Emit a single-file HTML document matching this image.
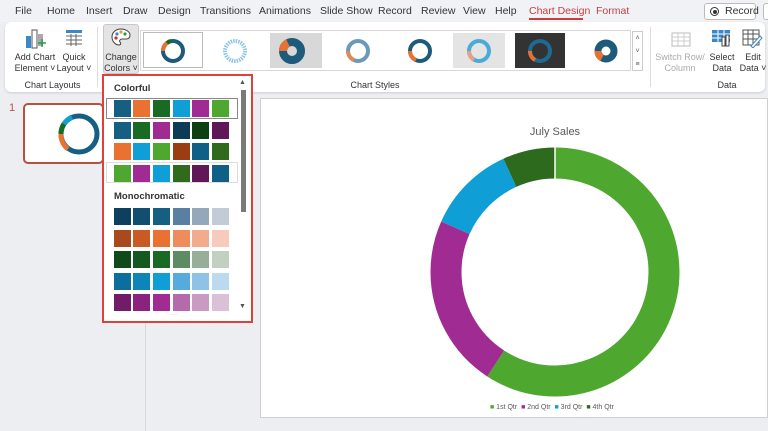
<!DOCTYPE html>
<html><head><meta charset="utf-8"><style>
*{margin:0;padding:0;box-sizing:border-box}
body{width:768px;height:431px;overflow:hidden;background:#eceef2;font-family:"Liberation Sans",sans-serif;position:relative;font-size:11px;color:#333}
.a{position:absolute}
.tab{position:absolute;top:5px;font-size:10.5px;color:#333}
.lbl{position:absolute;font-size:9px;color:#333;text-align:center;line-height:11px}
.sw{position:absolute;width:17px;height:17px}
</style></head><body>
<div class="a" style="left:0;top:0;width:768px;height:22px;background:#f1f2f5"></div>
<span class="tab" style="left:15px">File</span>
<span class="tab" style="left:47px">Home</span>
<span class="tab" style="left:86px">Insert</span>
<span class="tab" style="left:123px">Draw</span>
<span class="tab" style="left:158px">Design</span>
<span class="tab" style="left:200px">Transitions</span>
<span class="tab" style="left:259px">Animations</span>
<span class="tab" style="left:320px">Slide Show</span>
<span class="tab" style="left:378px">Record</span>
<span class="tab" style="left:421px">Review</span>
<span class="tab" style="left:463px">View</span>
<span class="tab" style="left:495px">Help</span>
<span class="tab" style="left:529px;color:#c43e3e">Chart Design</span>
<div class="a" style="left:529px;top:18px;width:54px;height:2px;background:#c43e3e"></div>
<span class="tab" style="left:596px;color:#c43e3e">Format</span>
<div class="a" style="left:704px;top:3px;width:52px;height:17px;border:1px solid #bbb;border-radius:3px;background:#fff;font-size:10.5px;padding:1px 0 0 20px">Record</div>
<div class="a" style="left:710px;top:7px;width:9px;height:9px;border:1px solid #333;border-radius:50%"></div>
<div class="a" style="left:712.5px;top:9.5px;width:4px;height:4px;background:#333;border-radius:50%"></div>
<div class="a" style="left:763px;top:3px;width:8px;height:17px;border:1px solid #bbb;border-radius:3px;background:#fff"></div>

<div class="a" style="left:5px;top:22px;width:760px;height:70px;background:#fff;border-radius:6px;box-shadow:0 1px 2px #ccc"></div>
<!-- Add chart element icon -->
<svg class="a" style="left:24px;top:28px" width="22" height="22"><rect x="2" y="8" width="5" height="12" fill="#3a88c8"/><rect x="8" y="2" width="5" height="18" fill="none" stroke="#555"/><rect x="14" y="6" width="5" height="12" fill="#aaa"/><path d="M14 15h8M18 11v8" stroke="#2e9a4a" stroke-width="1.5"/></svg>
<div class="lbl" style="left:12px;top:52px;width:46px">Add Chart<br>Element ˅</div>
<svg class="a" style="left:64px;top:28px" width="20" height="20"><rect x="2" y="2" width="16" height="3" fill="#3a88c8"/><path d="M2 8h16M2 12h16M2 16h16M7 6v12M12 6v12" stroke="#666"/></svg>
<div class="lbl" style="left:56px;top:52px;width:36px">Quick<br>Layout ˅</div>
<div class="lbl" style="left:15px;top:80px;width:75px">Chart Layouts</div>
<div class="a" style="left:97px;top:27px;width:1px;height:60px;background:#ddd"></div>
<div class="a" style="left:103px;top:24px;width:36px;height:50px;background:#e4e4e4;border:1px solid #c8c8c8;border-radius:3px"></div>
<svg class="a" style="left:110px;top:27px" width="22" height="20"><path d="M11 2C5 2 2 6 2 10s3 8 7 8c2 0 2-2 1-3s0-3 2-3h4c3 0 4-2 4-4C20 5 16 2 11 2z" fill="#fff" stroke="#444"/><circle cx="7" cy="7" r="1.6" fill="#3a88c8"/><circle cx="11" cy="5" r="1.6" fill="#e0a030"/><circle cx="15" cy="7" r="1.6" fill="#2e9a4a"/><circle cx="6" cy="11" r="1.6" fill="#c0392b"/></svg>
<div class="lbl" style="left:103px;top:52px;width:36px">Change<br>Colors ˅</div>
<!-- gallery -->
<div class="a" style="left:140px;top:30px;width:491px;height:41px;border:1px solid #d8d8d8;background:#fff"></div>
<div class="a" style="left:143px;top:32px;width:60px;height:36px;border:1px solid #bbb"></div>
<svg class="a" style="left:140px;top:30px" width="500" height="42">
<g fill="none" stroke-width="4">
<circle cx="33" cy="21" r="10" stroke="#1e5a7a"/><path d="M23 21a10 10 0 0 1 4-8" stroke="#e97132"/><path d="M27 13a10 10 0 0 1 4-2" stroke="#196b24"/>
<circle cx="95" cy="21" r="10" stroke="#8cc6e6" stroke-dasharray="1.5 1"/>
<circle cx="158" cy="21" r="9" stroke="#1e5a7a" stroke-width="7"/><path d="M149 21a9 9 0 0 1 4-7" stroke="#e97132" stroke-width="7"/>
<circle cx="218" cy="21" r="10" stroke="#6a9ab8"/><path d="M208 21a10 10 0 0 0 6 9" stroke="#e08a5a"/>
<circle cx="280" cy="21" r="10" stroke="#1e5a7a"/><path d="M270 21a10 10 0 0 0 6 9" stroke="#e97132"/>
<circle cx="342" cy="21" r="10" stroke="#4aaad8"/><path d="M332 21a10 10 0 0 0 5 9" stroke="#e8a080"/><path d="M335 13a10 10 0 0 1 7-2" stroke="#60b040"/>
<circle cx="466" cy="21" r="8" stroke="#1e5a7a" stroke-width="7"/><path d="M458 21a8 8 0 0 0 4 7" stroke="#e97132" stroke-width="7"/>
</g></svg>
<div class="a" style="left:270px;top:33px;width:52px;height:35px;background:#d8d8d8;z-index:-0"></div>
<svg class="a" style="left:270px;top:33px" width="52" height="35"><circle cx="22" cy="18" r="9" fill="none" stroke="#1e5a7a" stroke-width="8"/><path d="M13 18a9 9 0 0 1 5-8" fill="none" stroke="#e97132" stroke-width="8"/></svg>
<div class="a" style="left:453px;top:33px;width:52px;height:35px;background:#e4e4e4"></div>
<svg class="a" style="left:453px;top:33px" width="52" height="35"><circle cx="26" cy="18" r="10" fill="none" stroke="#4aaad8" stroke-width="4"/><path d="M16 18a10 10 0 0 0 5 9" fill="none" stroke="#e8a080" stroke-width="4"/></svg>
<div class="a" style="left:515px;top:33px;width:50px;height:35px;background:#333"></div>
<svg class="a" style="left:515px;top:33px" width="50" height="35"><circle cx="25" cy="18" r="10" fill="none" stroke="#1e6a92" stroke-width="4"/><path d="M15 18a10 10 0 0 0 5 9" fill="none" stroke="#e97132" stroke-width="4"/></svg>
<div class="a" style="left:632px;top:31px;width:11px;height:40px;border:1px solid #ccc;font-size:7px;text-align:center;line-height:13px;color:#555">˄<br>˅<br>≡</div>
<div class="lbl" style="left:350px;top:80px;width:50px">Chart Styles</div>
<div class="a" style="left:650px;top:27px;width:1px;height:60px;background:#ddd"></div>
<svg class="a" style="left:670px;top:28px" width="22" height="20"><rect x="2" y="5" width="18" height="13" fill="none" stroke="#bbb"/><path d="M2 9h18M2 13h18M8 5v13M14 5v13" stroke="#ccc"/></svg>
<div class="lbl" style="left:654px;top:52px;width:52px;color:#aaa">Switch Row/<br>Column</div>
<svg class="a" style="left:711px;top:28px" width="22" height="20"><rect x="1" y="2" width="18" height="12" fill="#3a88c8"/><path d="M1 6h18M1 10h18M7 2v12M13 2v12" stroke="#fff"/><rect x="11" y="9" width="3" height="9" fill="#fff" stroke="#444"/><rect x="15" y="7" width="3" height="11" fill="#fff" stroke="#444"/></svg>
<div class="lbl" style="left:706px;top:52px;width:32px">Select<br>Data</div>
<svg class="a" style="left:742px;top:28px" width="22" height="20"><rect x="1" y="2" width="16" height="15" fill="none" stroke="#555"/><path d="M1 6h16M1 11h16M6 2v15M11 2v15" stroke="#555"/><path d="M9 18l9-10 2 2-9 10z" fill="#fff" stroke="#3a88c8"/></svg>
<div class="lbl" style="left:738px;top:52px;width:30px">Edit<br>Data ˅</div>
<div class="lbl" style="left:712px;top:80px;width:30px">Data</div>

<!-- left panel -->
<div class="a" style="left:145px;top:92px;width:1px;height:339px;background:#d8d8d8"></div>
<div class="a" style="left:9px;top:102px;font-size:11px;color:#c0504d">1</div>
<div class="a" style="left:23px;top:103px;width:81px;height:61px;border:2px solid #b5513f;border-radius:5px;background:#fff"></div>
<svg class="a" style="left:23px;top:103px" width="81" height="61"><g fill="none" stroke-width="5"><circle cx="56" cy="31" r="18" stroke="#156082"/><path d="M38 31a18 18 0 0 1 3-10" stroke="#196b24"/><path d="M41 21a18 18 0 0 1 8-7" stroke="#0f9ed5"/><path d="M45 46a18 18 0 0 1-7-15" stroke="#e97132"/></g></svg>

<!-- slide -->
<div class="a" style="left:260px;top:98px;width:508px;height:320px;background:#fff;border:1px solid #d0d0d0"></div>
<div class="a" style="left:505px;top:126px;width:100px;text-align:center;font-size:11px;color:#595959">July Sales</div>
<svg class="a" style="left:430px;top:147px" width="250" height="250"><g transform="rotate(-90 125 125)" fill="none" stroke-width="31">
<circle cx="125" cy="125" r="109" stroke="#4ea72e" stroke-dasharray="405 700"/>
<circle cx="125" cy="125" r="109" stroke="#a02b93" stroke-dasharray="0 405 154 700"/>
<circle cx="125" cy="125" r="109" stroke="#0f9ed5" stroke-dasharray="0 559 79 700"/>
<circle cx="125" cy="125" r="109" stroke="#2d6a1e" stroke-dasharray="0 638 47 700"/>
</g><g stroke="#fff" stroke-width="1.5"><line x1="125" y1="0" x2="125" y2="32"/></g></svg>
<div class="a" style="left:490px;top:404px;font-size:7px;color:#595959;white-space:nowrap"><span style="color:#4ea72e">■</span> 1st Qtr &nbsp;<span style="color:#a02b93">■</span> 2nd Qtr &nbsp;<span style="color:#0f9ed5">■</span> 3rd Qtr &nbsp;<span style="color:#2d6a1e">■</span> 4th Qtr</div>

<!-- dropdown -->
<div class="a" style="left:102px;top:74px;width:151px;height:249px;border:2px solid #e0403a;background:#fff"></div>
<div class="a" style="left:114px;top:83px;font-size:9.5px;font-weight:bold;color:#333">Colorful</div>
<div class="a" style="left:106px;top:98px;width:132px;height:21px;border:1px solid #888"></div>
<div class="a" style="left:106px;top:162px;width:132px;height:21px;border:1px solid #ddd"></div>
<div class="a" style="left:114px;top:191px;font-size:9.5px;font-weight:bold;color:#333">Monochromatic</div>
<div class="a" style="left:241px;top:90px;width:5px;height:122px;background:#7a7a7a"></div>
<div class="a" style="left:239px;top:79px;font-size:7px;color:#555">▲</div>
<div class="a" style="left:239px;top:303px;font-size:7px;color:#555">▼</div>
<div class="a" style="left:170px;top:312px;font-size:6px;color:#aaa">····</div>
<div id="sw"></div>
<script>
var X=[114,133,153,173,192,212];
var rows=[[100,["#156082","#e97132","#196b24","#0f9ed5","#a02b93","#4ea72e"]],
[122,["#156082","#196b24","#a02b93","#0d3a56","#0e3f13","#5e1858"]],
[143,["#e97132","#0f9ed5","#4ea72e","#9b3d12","#0f5f86","#2f6a1d"]],
[165,["#4ea72e","#a02b93","#0f9ed5","#2f6a1d","#5e1858","#0f5f86"]],
[208,["#0f3f5e","#124e70","#156082","#5a7fa0","#95a7ba","#c2cbd6"]],
[230,["#a84a1e","#c95a22","#e97132","#ef8c5e","#f2ab8d","#f6cbbb"]],
[251,["#104a18","#15591f","#196b24","#5e8c62","#97af98","#c2d0c2"]],
[273,["#0b6e9c","#0d85b9","#0f9ed5","#55acdc","#8ec3e6","#bcdaef"]],
[294,["#711c69","#8a2380","#a02b93","#b56aab","#c99bc3","#dbc1d7"]]];
var h="";rows.forEach(function(r){r[1].forEach(function(c,i){h+='<div class="sw" style="left:'+X[i]+'px;top:'+r[0]+'px;background:'+c+'"></div>'})});
document.getElementById("sw").innerHTML=h;
</script>
</body></html>
